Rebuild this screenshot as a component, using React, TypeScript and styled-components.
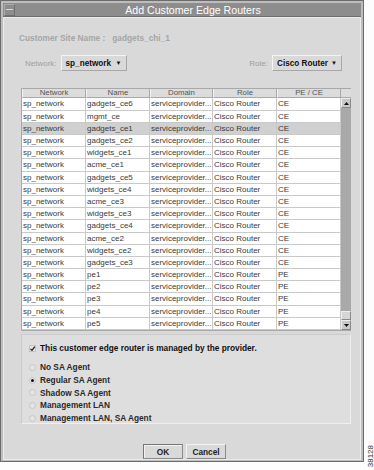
import React from "react";
import styled, { createGlobalStyle } from "styled-components";

const Global = createGlobalStyle`
  html, body { margin: 0; padding: 0; background: #ffffff; }
  #root { width: 374px; height: 470px; }
`;

const Page = styled.div`
  width: 374px;
  height: 470px;
  display: flex;
  align-items: flex-start;
  background: #fdfdfd;
`;

const Window = styled.div`
  width: 364px;
  height: 462px;
  box-sizing: border-box;
  border: 1px solid #6c6c6c;
  background: #bdbdbd;
  padding: 2px 2px 1px 2px;
  display: flex;
  flex-direction: column;
`;

const TitleBar = styled.div`
  height: 14px;
  background: #8d8d8d;
  display: flex;
  align-items: center;
  border-bottom: 1px solid #6f6f6f;
`;

const MenuButton = styled.div`
  width: 11px;
  height: 12px;
  margin-left: 1px;
  box-sizing: border-box;
  border: 1px solid #a9a9a9;
  border-right-color: #707070;
  border-bottom-color: #707070;
  display: flex;
  align-items: center;
  justify-content: center;
  &::after {
    content: "";
    width: 7px;
    height: 1px;
    background: #d8d8d8;
  }
`;

const Title = styled.div`
  flex: 1;
  text-align: center;
  color: #ffffff;
  font-family: "Liberation Sans", Arial, sans-serif;
  font-size: 10.6px;
  padding-right: 12px;
  padding-left: 22px;
`;

const Body = styled.div`
  flex: 1;
  background: #d9d9d9;
  border: 1px solid #ececec;
  display: flex;
  flex-direction: column;
  padding: 15px 9px 0 17px;
`;

const SiteRow = styled.div`
  display: flex;
  gap: 7px;
  font-family: "Liberation Sans", Arial, sans-serif;
  font-weight: bold;
  font-size: 8.3px;
  color: #a6a6a6;
  line-height: 10px;
  margin-left: -2px;
`;

const SelectRow = styled.div`
  display: flex;
  align-items: center;
  justify-content: space-between;
  margin-top: 12px;
  padding-left: 4px;
  padding-right: 9px;
`;

const SelectGroup = styled.div`
  display: flex;
  align-items: center;
  gap: 4px;
`;

const FieldLabel = styled.span`
  font-family: "Liberation Sans", Arial, sans-serif;
  font-size: 8px;
  color: #a0a0a0;
`;

const Dropdown = styled.div<{ $w: number }>`
  width: ${(p) => p.$w}px;
  height: 16px;
  box-sizing: border-box;
  border: 1px solid #f4f4f4;
  border-right-color: #a8a8a8;
  border-bottom-color: #a8a8a8;
  display: flex;
  align-items: center;
  justify-content: space-between;
  padding: 0 4px 0 4px;
  font-family: "Liberation Sans", Arial, sans-serif;
  font-weight: bold;
  font-size: 8.2px;
  color: #111;
  white-space: nowrap;
`;

const Arrow = styled.span`
  font-size: 6px;
  color: #111;
`;

const TableWrap = styled.div`
  margin-top: 17px;
  width: 330px;
  display: flex;
  border: 1px solid #a8a8a8;
  border-right: none;
  box-sizing: border-box;
`;

const Grid = styled.div`
  width: 319px;
  display: flex;
  flex-direction: column;
`;

const Row = styled.div<{ $sel?: boolean }>`
  display: grid;
  grid-template-columns: 64px 64px 63px 64px 64px;
  height: 12.2px;
  background: ${(p) => (p.$sel ? "#d0d0d0" : "#ffffff")};
`;

const Cell = styled.div`
  box-sizing: border-box;
  border-right: 1px solid #c9c9c9;
  border-bottom: 1px solid #c9c9c9;
  font-family: "Liberation Sans", Arial, sans-serif;
  font-size: 8px;
  color: #3a3a3a;
  line-height: 11px;
  padding-left: 1px;
  white-space: nowrap;
  overflow: hidden;
`;

const HeadRow = styled.div`
  display: grid;
  grid-template-columns: 64px 64px 63px 64px 64px;
  height: 9px;
  background: #dcdcdc;
`;

const HeadCell = styled.div`
  box-sizing: border-box;
  border-right: 1px solid #a9a9a9;
  border-bottom: 1px solid #a9a9a9;
  border-left: 1px solid #f2f2f2;
  font-family: "Liberation Sans", Arial, sans-serif;
  font-size: 7.8px;
  color: #555;
  line-height: 8px;
  text-align: center;
`;

const ScrollCol = styled.div`
  width: 11px;
  display: flex;
  flex-direction: column;
`;

const Corner = styled.div`
  height: 9px;
  background: #dcdcdc;
  border-bottom: 1px solid #a9a9a9;
  box-sizing: border-box;
`;

const ScrollBtn = styled.div`
  height: 10px;
  background: #c9c9c9;
  border: 1px solid #ececec;
  border-right-color: #8a8a8a;
  border-bottom-color: #8a8a8a;
  box-sizing: border-box;
  display: flex;
  align-items: center;
  justify-content: center;
`;

const Track = styled.div`
  flex: 1;
  background: #a9a9a9;
  display: flex;
  flex-direction: column;
  justify-content: flex-end;
`;

const Thumb = styled.div`
  height: 9px;
  background: #d6d6d6;
  border: 1px solid #efefef;
  border-right-color: #8a8a8a;
  border-bottom-color: #8a8a8a;
  box-sizing: border-box;
`;

const Panel = styled.div`
  margin-top: 3px;
  width: 330px;
  height: 90px;
  box-sizing: border-box;
  background: #dedede;
  border: 1px solid #cbcbcb;
  border-right-color: #efefef;
  border-bottom-color: #efefef;
  padding: 8px 0 0 7px;
  display: flex;
  flex-direction: column;
`;

const CheckLine = styled.div`
  display: flex;
  align-items: center;
  gap: 4px;
  height: 10px;
  font-family: "Liberation Sans", Arial, sans-serif;
  font-weight: bold;
  font-size: 8.3px;
  color: #111;
`;

const RadioList = styled.div`
  margin-top: 8px;
  display: flex;
  flex-direction: column;
`;

const RadioLine = styled.div`
  display: flex;
  align-items: center;
  gap: 4px;
  height: 12.7px;
  font-family: "Liberation Sans", Arial, sans-serif;
  font-weight: bold;
  font-size: 8.3px;
  color: #2a2a2a;
`;

const RadioDot = styled.span<{ $on?: boolean }>`
  width: 7px;
  height: 7px;
  border-radius: 50%;
  box-sizing: border-box;
  border: 1px solid #c8c8c8;
  background: #e4e4e4;
  display: flex;
  align-items: center;
  justify-content: center;
  &::after {
    content: "";
    width: 3px;
    height: 3px;
    border-radius: 50%;
    background: ${(p) => (p.$on ? "#111" : "transparent")};
  }
`;

const Buttons = styled.div`
  margin-top: 20px;
  display: flex;
  justify-content: center;
  gap: 3px;
  padding-right: 3px;
`;

const Btn = styled.div<{ $def?: boolean; $w: number }>`
  width: ${(p) => p.$w}px;
  height: 15px;
  box-sizing: border-box;
  border: 1px solid ${(p) => (p.$def ? "#777" : "#f2f2f2")};
  border-right-color: #8a8a8a;
  border-bottom-color: #8a8a8a;
  box-shadow: ${(p) => (p.$def ? "inset 1px 1px 0 #f2f2f2" : "none")};
  display: flex;
  align-items: center;
  justify-content: center;
  font-family: "Liberation Sans", Arial, sans-serif;
  font-weight: bold;
  font-size: 8.3px;
  color: #222;
`;

const FigNum = styled.div`
  align-self: flex-end;
  margin-bottom: 3px;
  margin-left: 2px;
  writing-mode: vertical-rl;
  transform: rotate(180deg);
  font-family: "Liberation Sans", sans-serif;
  font-size: 8px;
  color: #333;
`;

const rows: [string, string][] = [
  ["gadgets_ce6", "CE"],
  ["mgmt_ce", "CE"],
  ["gadgets_ce1", "CE"],
  ["gadgets_ce2", "CE"],
  ["widgets_ce1", "CE"],
  ["acme_ce1", "CE"],
  ["gadgets_ce5", "CE"],
  ["widgets_ce4", "CE"],
  ["acme_ce3", "CE"],
  ["widgets_ce3", "CE"],
  ["gadgets_ce4", "CE"],
  ["acme_ce2", "CE"],
  ["widgets_ce2", "CE"],
  ["gadgets_ce3", "CE"],
  ["pe1", "PE"],
  ["pe2", "PE"],
  ["pe3", "PE"],
  ["pe4", "PE"],
  ["pe5", "PE"],
];

const radios = [
  "No SA Agent",
  "Regular SA Agent",
  "Shadow SA Agent",
  "Management LAN",
  "Management LAN, SA Agent",
];

export default function App() {
  return (
    <>
      <Global />
      <Page>
        <Window>
          <TitleBar>
            <MenuButton />
            <Title>Add Customer Edge Routers</Title>
          </TitleBar>
          <Body>
            <SiteRow>
              <span>Customer Site Name :</span>
              <span>gadgets_chi_1</span>
            </SiteRow>
            <SelectRow>
              <SelectGroup>
                <FieldLabel>Network:</FieldLabel>
                <Dropdown $w={66}>
                  <span>sp_network</span>
                  <Arrow>▼</Arrow>
                </Dropdown>
              </SelectGroup>
              <SelectGroup>
                <FieldLabel>Role:</FieldLabel>
                <Dropdown $w={70}>
                  <span>Cisco Router</span>
                  <Arrow>▼</Arrow>
                </Dropdown>
              </SelectGroup>
            </SelectRow>
            <TableWrap>
              <Grid>
                <HeadRow>
                  <HeadCell>Network</HeadCell>
                  <HeadCell>Name</HeadCell>
                  <HeadCell>Domain</HeadCell>
                  <HeadCell>Role</HeadCell>
                  <HeadCell>PE / CE</HeadCell>
                </HeadRow>
                {rows.map(([name, kind], i) => (
                  <Row key={name} $sel={i === 2}>
                    <Cell>sp_network</Cell>
                    <Cell>{name}</Cell>
                    <Cell>serviceprovider...</Cell>
                    <Cell>Cisco Router</Cell>
                    <Cell>{kind}</Cell>
                  </Row>
                ))}
              </Grid>
              <ScrollCol>
                <Corner />
                <ScrollBtn>
                  <svg width="5" height="3" viewBox="0 0 5 3">
                    <path d="M0 3 L2.5 0 L5 3 Z" fill="#111" />
                  </svg>
                </ScrollBtn>
                <Track>
                  <Thumb />
                </Track>
                <ScrollBtn>
                  <svg width="5" height="3" viewBox="0 0 5 3">
                    <path d="M0 0 L2.5 3 L5 0 Z" fill="#111" />
                  </svg>
                </ScrollBtn>
              </ScrollCol>
            </TableWrap>
            <Panel>
              <CheckLine>
                <svg width="7" height="7" viewBox="0 0 7 7">
                  <rect x="0.5" y="0.5" width="6" height="6" fill="#e6e6e6" stroke="#c4c4c4" />
                  <path d="M1.5 3.8 L3 5.3 L5.8 1.6" fill="none" stroke="#111" strokeWidth="1.2" />
                </svg>
                <span>This customer edge router is managed by the provider.</span>
              </CheckLine>
              <RadioList>
                {radios.map((r, i) => (
                  <RadioLine key={r}>
                    <RadioDot $on={i === 1} />
                    <span>{r}</span>
                  </RadioLine>
                ))}
              </RadioList>
            </Panel>
            <Buttons>
              <Btn $def $w={40}>OK</Btn>
              <Btn $w={40}>Cancel</Btn>
            </Buttons>
          </Body>
        </Window>
        <FigNum>38128</FigNum>
      </Page>
    </>
  );
}
